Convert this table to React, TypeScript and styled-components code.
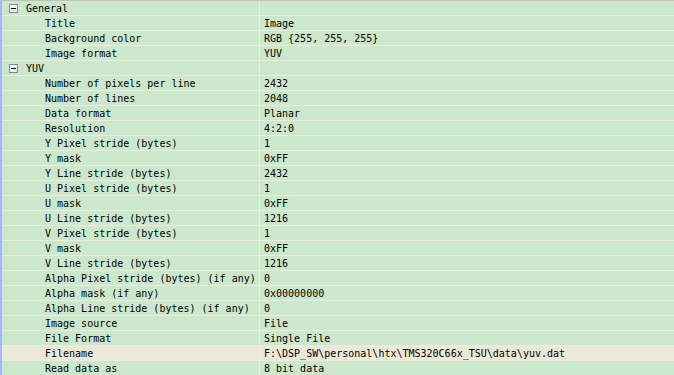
import React from "react";
import styled, { createGlobalStyle } from "styled-components";

const Global = createGlobalStyle`
  html, body { margin: 0; padding: 0; background: #cce8cc; }
  body { overflow: hidden; }
`;

const Grid = styled.div`
  width: 674px;
  height: 375px;
  overflow: hidden;
  border-top: 1px solid #c4c0b8;
  border-left: 2px solid #a3b8f4;
  box-sizing: border-box;
  background: #cce8cc;
  font-family: "DejaVu Sans Mono", "Liberation Mono", monospace;
  font-size: 10px;
  color: #000;
`;

const Row = styled.div<{ $selected?: boolean }>`
  display: grid;
  grid-template-columns: 258px 1fr;
  height: 14px;
  border-bottom: 1px solid #f0ecdc;
  background: ${(p) => (p.$selected ? "#ece8d8" : "#cce8cc")};
`;

const NameCell = styled.div<{ $indent: number }>`
  display: flex;
  align-items: center;
  padding-left: ${(p) => p.$indent}px;
  padding-top: 2px;
  box-sizing: border-box;
  border-right: 1px solid #f0ecdc;
  white-space: nowrap;
  overflow: hidden;
  line-height: 12px;
`;

const ValueCell = styled.div`
  display: flex;
  align-items: center;
  padding-left: 4px;
  padding-top: 2px;
  box-sizing: border-box;
  white-space: nowrap;
  overflow: hidden;
  line-height: 12px;
`;

const Toggle = styled.span`
  position: relative;
  top: -1px;
  width: 7px;
  height: 7px;
  border: 1px solid #7a8a9c;
  background: linear-gradient(135deg, #ffffff 0%, #e4e4dc 100%);
  margin-right: 8px;
  flex: none;
  &::after {
    content: "";
    position: absolute;
    left: 1px;
    top: 3px;
    width: 5px;
    height: 1px;
    background: #000;
  }
`;

type Item = { name: string; value?: string; category?: boolean; selected?: boolean };

const items: Item[] = [
  { name: "General", category: true },
  { name: "Title", value: "Image" },
  { name: "Background color", value: "RGB {255, 255, 255}" },
  { name: "Image format", value: "YUV" },
  { name: "YUV", category: true },
  { name: "Number of pixels per line", value: "2432" },
  { name: "Number of lines", value: "2048" },
  { name: "Data format", value: "Planar" },
  { name: "Resolution", value: "4:2:0" },
  { name: "Y Pixel stride (bytes)", value: "1" },
  { name: "Y mask", value: "0xFF" },
  { name: "Y Line stride (bytes)", value: "2432" },
  { name: "U Pixel stride (bytes)", value: "1" },
  { name: "U mask", value: "0xFF" },
  { name: "U Line stride (bytes)", value: "1216" },
  { name: "V Pixel stride (bytes)", value: "1" },
  { name: "V mask", value: "0xFF" },
  { name: "V Line stride (bytes)", value: "1216" },
  { name: "Alpha Pixel stride (bytes) (if any)", value: "0" },
  { name: "Alpha mask (if any)", value: "0x00000000" },
  { name: "Alpha Line stride (bytes) (if any)", value: "0" },
  { name: "Image source", value: "File" },
  { name: "File Format", value: "Single File" },
  { name: "Filename", value: "F:\\DSP_SW\\personal\\htx\\TMS320C66x_TSU\\data\\yuv.dat", selected: true },
  { name: "Read data as", value: "8 bit data" },
];

export default function App() {
  return (
    <>
      <Global />
      <Grid>
        {items.map((it, i) => (
          <Row key={i} $selected={it.selected}>
            {it.category ? (
              <NameCell $indent={7}>
                <Toggle />
                {it.name}
              </NameCell>
            ) : (
              <NameCell $indent={43}>{it.name}</NameCell>
            )}
            <ValueCell>{it.value ?? ""}</ValueCell>
          </Row>
        ))}
      </Grid>
    </>
  );
}
